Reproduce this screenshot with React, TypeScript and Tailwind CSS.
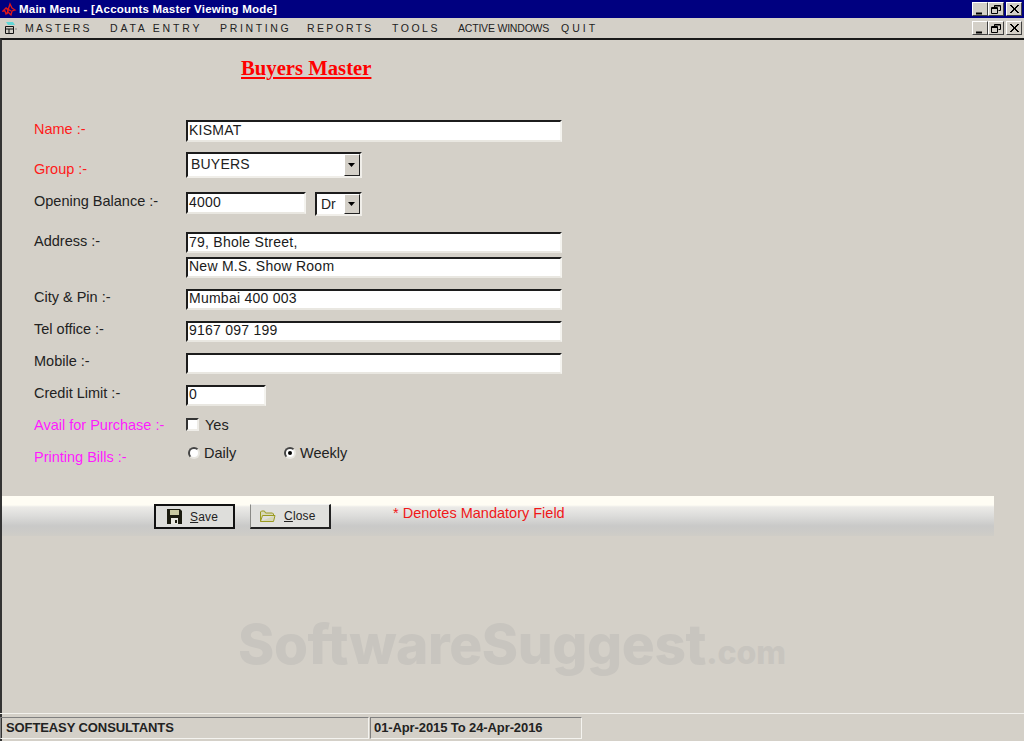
import React from "react";

const sans = "font-['Liberation_Sans',Arial,sans-serif]";

function WinBtn({ kind, className }: { kind: "min" | "max" | "close"; className: string }) {
  return (
    <div className={"flex items-center justify-center bg-[#d4d0c8] border border-t-white border-l-white border-b-[#404040] border-r-[#404040] " + className}>
      <svg width="12" height="11" viewBox="0 0 12 11" fill="none" stroke="#000">
        {kind === "min" && <path d="M2 9.5h6" strokeWidth="2" />}
        {kind === "max" && (
          <path d="M4.5 3V1.5h6v5H8.5M1.5 3.5h6v6h-6zM1.500 4.500h6M4.500 2h6" strokeWidth="1" />
        )}
        {kind === "close" && <path d="M2 1l8 8M3 1l8 8M10 1l-8 8M11 1l-8 8" strokeWidth="1" />}
      </svg>
    </div>
  );
}

function TextBox({ value, className }: { value: string; className: string }) {
  return (
    <div className={"bg-white border-2 border-t-[#1c1c1c] border-l-[#1c1c1c] border-b-[#e9e7e1] border-r-[#f4f3ef] pl-px text-[14px] text-[#1a1a1a] tracking-[0.25px] whitespace-nowrap overflow-hidden " + className}>
      {value}
    </div>
  );
}

function Arrow() {
  return (
    <div className="w-[16px] h-full bg-[#d4d0c8] flex items-center justify-center border border-t-white border-l-white border-b-[#222] border-r-[#222]">
      <svg width="8" height="5" viewBox="0 0 8 5"><path d="M0 0h7L3.500 4z" fill="#000" /></svg>
    </div>
  );
}

function Label({ children, className }: { children: React.ReactNode; className: string }) {
  return <div className={"w-[152px] shrink-0 text-[14.5px] leading-[18px] whitespace-nowrap " + className}>{children}</div>;
}

export default function App() {
  return (
    <div className={"w-[1024px] h-[741px] overflow-hidden flex flex-col bg-[#d4d0c8] text-[#222] " + sans}>
      {/* Title bar */}
      <div className="h-[18px] shrink-0 bg-[#000080] flex items-center pl-[2px] pr-[2px]">
        <svg width="15" height="15" viewBox="0 0 15 15" fill="none" stroke="#e01818" strokeWidth="1.300">
          <path d="M1 9l3-3 2 2 2-6 2 4 3 2-3 1-1 4-3-3-2 2-1-3z" />
          <path d="M4 6l5 3M6 8l-1 4" />
        </svg>
        <span className="ml-[2px] text-white font-bold text-[11.500px] leading-[18px] tracking-[0.2px] whitespace-nowrap">Main Menu - [Accounts Master Viewing Mode]</span>
        <div className="ml-auto flex items-center">
          <WinBtn kind="min" className="w-[16px] h-[14px]" />
          <WinBtn kind="max" className="w-[16px] h-[14px]" />
          <WinBtn kind="close" className="w-[16px] h-[14px] ml-[2px]" />
        </div>
      </div>

      {/* Menu bar */}
      <div className="h-[20px] shrink-0 flex items-center pl-[4px] pr-[2px] text-[10.500px] leading-[20px] text-[#222] whitespace-nowrap">
        <svg width="14" height="14" viewBox="0 0 14 14" fill="none" className="mr-[7px]">
          <path d="M2 1h7l2 3H4z" fill="#5fd6d6" />
          <path d="M1.500 5.500h8v7h-8zM1.500 8h8M5 8v4.500" stroke="#111" />
          <path d="M11 8h2" stroke="#8a8a8a" />
        </svg>
        <span className="w-[85px] tracking-[2.300px]">MASTERS</span>
        <span className="w-[110px] tracking-[2.800px]">DATA ENTRY</span>
        <span className="w-[87px] tracking-[2.650px]">PRINTING</span>
        <span className="w-[85px] tracking-[2.300px]">REPORTS</span>
        <span className="w-[66px] tracking-[2.500px]">TOOLS</span>
        <span className="w-[103px] tracking-[-0.200px]">ACTIVE WINDOWS</span>
        <span className="tracking-[3px]">QUIT</span>
        <div className="ml-auto flex items-center">
          <WinBtn kind="min" className="w-[16px] h-[14px]" />
          <WinBtn kind="max" className="w-[16px] h-[14px]" />
          <WinBtn kind="close" className="w-[16px] h-[14px] ml-[2px]" />
        </div>
      </div>

      {/* Main area */}
      <div className="relative flex-1 min-h-0 flex flex-col border-t-2 border-t-[#1a1a1a] border-l-2 border-l-[#333]">
        <div className="h-[80px] shrink-0 pt-[14px] pl-[239px]">
          <span className="font-['Liberation_Serif',serif] font-bold text-[20.700px] leading-[28px] text-[#ff0000] underline">Buyers Master</span>
        </div>

        <div className="flex flex-col pl-[32px]">
          <div className="flex items-start">
            <Label className="text-[#ff1a1a]">Name :-</Label>
            <TextBox value="KISMAT" className="w-[376px] h-[22px] leading-[16px]" />
          </div>

          <div className="flex items-start mt-[10px]">
            <Label className="text-[#ff1a1a] mt-[8px]">Group :-</Label>
            <div className="w-[176px] h-[26px] bg-white border-2 border-t-[#1c1c1c] border-l-[#1c1c1c] border-b-[#f0eee9] border-r-[#f0eee9] flex">
              <span className="flex-1 pl-[3px] text-[14px] leading-[20px] tracking-[0.2px]">BUYERS</span>
              <Arrow />
            </div>
          </div>

          <div className="flex items-start mt-[14px]">
            <Label className="">Opening Balance :-</Label>
            <TextBox value="4000" className="w-[120px] h-[22px] leading-[16px]" />
            <div className="ml-[9px] w-[47px] h-[24px] bg-white border-2 border-t-[#1c1c1c] border-l-[#1c1c1c] border-b-[#f0eee9] border-r-[#f0eee9] flex">
              <span className="flex-1 pl-[4px] text-[14px] leading-[20px]">Dr</span>
              <Arrow />
            </div>
          </div>

          <div className="flex items-start mt-[16px]">
            <Label className="">Address :-</Label>
            <div className="flex flex-col gap-[4px]">
              <TextBox value="79, Bhole Street," className="w-[376px] h-[21px] leading-[16px]" />
              <TextBox value="New M.S. Show Room" className="w-[376px] h-[21px] leading-[14px]" />
            </div>
          </div>

          <div className="flex items-start mt-[11px]">
            <Label className="-mt-px">City &amp; Pin :-</Label>
            <TextBox value="Mumbai 400 003" className="w-[376px] h-[21px] leading-[14px]" />
          </div>

          <div className="flex items-start mt-[11px]">
            <Label className="-mt-px">Tel office :-</Label>
            <TextBox value="9167 097 199" className="w-[376px] h-[21px] leading-[14px]" />
          </div>

          <div className="flex items-start mt-[11px]">
            <Label className="-mt-px">Mobile :-</Label>
            <TextBox value="" className="w-[376px] h-[21px] leading-[14px]" />
          </div>

          <div className="flex items-start mt-[11px]">
            <Label className="-mt-px">Credit Limit :-</Label>
            <TextBox value="0" className="w-[80px] h-[21px] leading-[14px]" />
          </div>

          <div className="flex items-start mt-[10px]">
            <Label className="text-[#ff1aff]">Avail for Purchase :-</Label>
            <div className="mt-[2px] w-[13px] h-[13px] bg-white border-2 border-t-[#333] border-l-[#333] border-b-[#efede8] border-r-[#efede8]" />
            <span className="ml-[6px] text-[14.500px] leading-[18px]">Yes</span>
          </div>

          <div className="flex items-start mt-[14px]">
            <Label className="text-[#ff1aff]">Printing Bills :-</Label>
            <div className="-mt-[4px] flex items-center h-[18px]">
              <div className="w-[12px] h-[12px] ml-[2px] rounded-full bg-white border-2 border-t-[#444] border-l-[#444] border-b-[#e8e6e0] border-r-[#e8e6e0]" />
              <span className="ml-[4px] w-[80px] text-[14.500px] leading-[18px]">Daily</span>
              <div className="w-[12px] h-[12px] rounded-full bg-white border-2 border-t-[#444] border-l-[#444] border-b-[#e8e6e0] border-r-[#e8e6e0] flex items-center justify-center">
                <div className="w-[4px] h-[4px] rounded-full bg-black" />
              </div>
              <span className="ml-[4px] text-[14.500px] leading-[18px]">Weekly</span>
            </div>
          </div>
        </div>

        {/* Button band */}
        <div className="mt-[30px] w-[992px] h-[40px] shrink-0 flex items-start pt-[8px] pl-[152px] bg-[linear-gradient(180deg,#fffdf4_0px,#fffdf4_9px,#ecebe8_11px,#dcdcda_20px,#c9c9c8_30px,#cfcdc7_40px)]">
          <button className="w-[81px] h-[25px] flex items-center pl-[11px] bg-[#dededb] border-2 border-[#111] text-[12px] leading-[14px]">
            <svg width="15" height="15" viewBox="0 0 15 15">
              <path d="M0 0h13l2 2v13H0z" fill="#1c1c10" />
              <path d="M3 1h9v5H3z" fill="#c8c8a0" />
              <path d="M4 9h7v6H4z" fill="#e8e8e0" />
              <path d="M8 11h2v3H8z" fill="#1c1c10" />
            </svg>
            <span className="ml-[8px] tracking-[0.2px]"><span className="underline">S</span>ave</span>
          </button>
          <button className="ml-[15px] w-[81px] h-[25px] flex items-center pl-[8px] bg-[#e0e0dd] border border-t-[#f4f4f2] border-l-[#8a8a86] border-b-2 border-r-2 border-b-[#222] border-r-[#222] text-[12px] leading-[14px]">
            <svg width="17" height="13" viewBox="0 0 17 13" fill="none">
              <path d="M1.500 11.500V2l1-1h3l1 2h7l1 1v2M1.500 11.500h13l1.500-6H3.500z" fill="#d8d8b8" stroke="#9a9a20" />
            </svg>
            <span className="ml-[8px] tracking-[0.2px]"><span className="underline">C</span>lose</span>
          </button>
          <span className="ml-[62px] text-[14.500px] leading-[18px] text-[#f01818] whitespace-nowrap">* Denotes Mandatory Field</span>
        </div>

        {/* Watermark */}
        <div className="absolute left-[236px] top-[574px] flex items-baseline font-['Inter',sans-serif] font-extrabold text-[#c8c5bf] whitespace-nowrap pointer-events-none">
          <span className="text-[55px] leading-[60px] tracking-[-0.400px]">SoftwareSuggest</span>
          <span className="text-[32px] leading-[60px]">.com</span>
        </div>

        {/* Status bar */}
        <div className="mt-auto h-[28px] shrink-0 -ml-[2px] border-t border-t-[#f2f1ed] flex items-start pt-[3px] text-[13px] font-bold leading-[19px] tracking-[-0.100px] whitespace-nowrap">
          <div className="w-[369px] h-[22px] pl-[5px] border border-t-[#808080] border-l-[#808080] border-b-[#f4f3ef] border-r-[#f4f3ef]">SOFTEASY CONSULTANTS</div>
          <div className="ml-[1px] w-[212px] h-[22px] pl-[3px] border border-t-[#808080] border-l-[#808080] border-b-[#f4f3ef] border-r-[#f4f3ef]">01-Apr-2015 To 24-Apr-2016</div>
        </div>
      </div>
    </div>
  );
}
